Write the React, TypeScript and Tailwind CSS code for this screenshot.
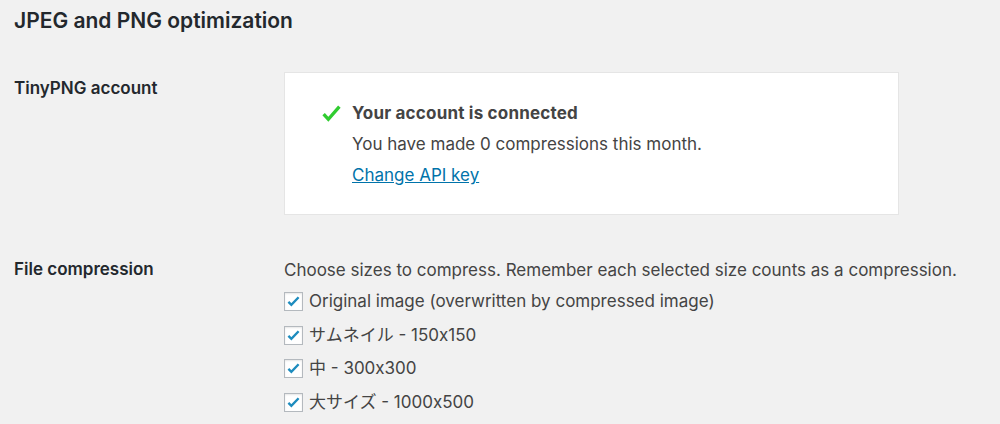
import React from "react";

const sizes = [
  "Original image (overwritten by compressed image)",
  "サムネイル - 150x150",
  "中 - 300x300",
  "大サイズ - 1000x500",
];

const CheckBox: React.FC = () => (
  <span className="flex h-[19px] w-[19px] shrink-0 items-center justify-center border border-[#b4b9be] bg-white shadow-[inset_0_1px_2px_rgba(0,0,0,0.1)]">
    <svg viewBox="0 0 20 20" className="h-[17px] w-[17px]">
      <path d="M4 10.5l3.5 3.5L16 5" fill="none" stroke="#1e8cbe" strokeWidth="2.8" />
    </svg>
  </span>
);

const App: React.FC = () => {
  return (
    <div
      className="h-[424px] w-[1000px] overflow-hidden bg-[#f1f1f1] text-[#444]"
      style={{ fontFamily: "Inter, 'Noto Sans CJK JP', sans-serif" }}
    >
      <h2 className="px-[14px] pt-[6px] text-[21px] font-semibold leading-[30px] text-[#23282d]">
        JPEG and PNG optimization
      </h2>

      <div className="mt-[36px] flex px-[14px]">
        <div className="w-[270px] pt-[4px] text-[17px] font-semibold leading-[24px] text-[#23282d]">
          TinyPNG account
        </div>
        <div className="flex h-[143px] w-[615px] border border-[#e5e5e5] bg-white pl-[36px] pt-[25px]">
          <svg viewBox="0 0 20 20" className="mt-[5px] h-[21px] w-[21px] shrink-0">
            <path d="M2.5 10.5l4.5 5L17.5 3.5" fill="none" stroke="#30cc30" strokeWidth="3.2" />
          </svg>
          <div className="ml-[10px] text-[17px] leading-[31px]">
            <div className="font-bold tracking-[0.2px] text-[#444]">Your account is connected</div>
            <div>You have made 0 compressions this month.</div>
            <a href="#" className="text-[#0073aa] underline">
              Change API key
            </a>
          </div>
        </div>
      </div>

      <div className="mt-[40px] flex px-[14px]">
        <div className="w-[270px] pt-[2px] text-[17px] font-semibold leading-[24px] text-[#23282d]">
          File compression
        </div>
        <div className="text-[17px]">
          <p className="leading-[30px]">
            Choose sizes to compress. Remember each selected size counts as a compression.
          </p>
          <div className="flex flex-col">
            {sizes.map((s) => (
              <label key={s} className="flex h-[33.5px] items-center gap-[6px]">
                <CheckBox />
                <span>{s}</span>
              </label>
            ))}
          </div>
        </div>
      </div>
    </div>
  );
};

export default App;
